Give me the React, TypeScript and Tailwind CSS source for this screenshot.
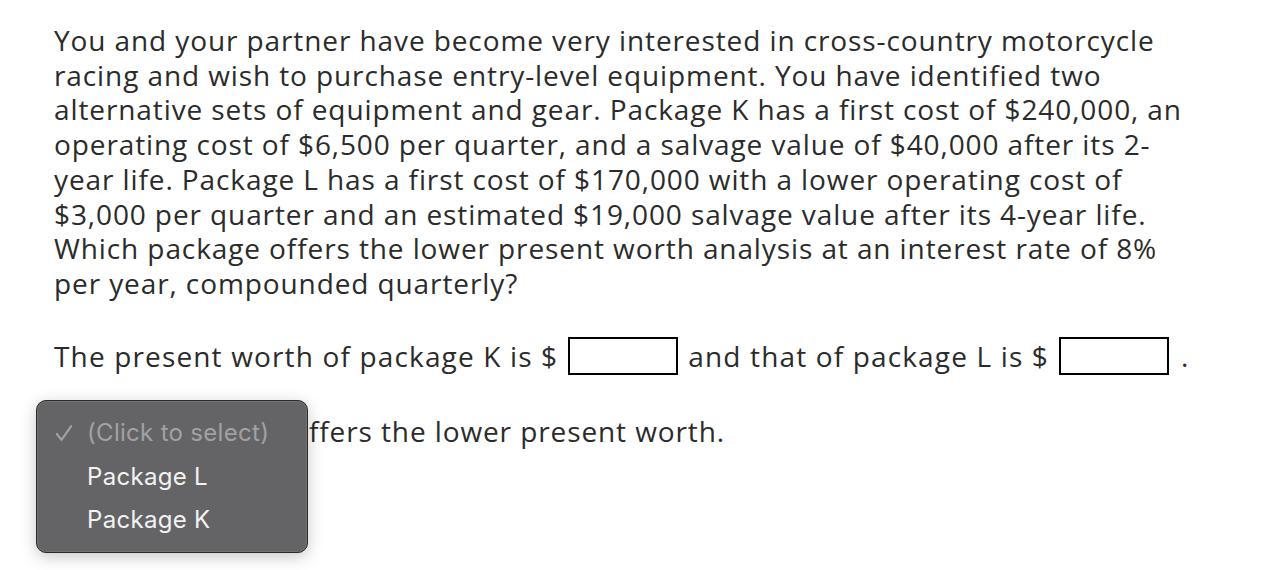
const lines = [
  'You and your partner have become very interested in cross-country motorcycle',
  'racing and wish to purchase entry-level equipment. You have identified two',
  'alternative sets of equipment and gear. Package K has a first cost of $240,000, an',
  'operating cost of $6,500 per quarter, and a salvage value of $40,000 after its 2-',
  'year life. Package L has a first cost of $170,000 with a lower operating cost of',
  '$3,000 per quarter and an estimated $19,000 salvage value after its 4-year life.',
  'Which package offers the lower present worth analysis at an interest rate of 8%',
  'per year, compounded quarterly?',
]

function AnswerBox() {
  return <span className="mx-[10px] inline-block h-[38px] w-[110px] border-2 border-black bg-white" />
}

function CheckIcon() {
  return (
    <svg width="18" height="18" viewBox="0 0 18 18" fill="none" stroke="currentColor" strokeWidth="2.2" strokeLinecap="round" strokeLinejoin="round">
      <path d="M1.8 10 6.5 15.8 16.2 2.2" />
    </svg>
  )
}

function SelectMenu() {
  return (
    <div className="absolute left-[36px] top-[400px] w-[272px] rounded-[10px] border border-[#2a2a2a] bg-[#646466] py-[10px] shadow-[0_0_0_1px_rgba(255,255,255,0.1)_inset,0_4px_16px_rgba(0,0,0,0.22)] font-['Inter',sans-serif] text-[24px] leading-[43.5px] tracking-[0.3px]">
      <div className="flex items-center pl-[18px] text-[#a1a1a4]">
        <span className="w-[32px]"><CheckIcon /></span>
        <span>(Click to select)</span>
      </div>
      <div className="pl-[50px] text-[#f2f2f2]">Package L</div>
      <div className="pl-[50px] text-[#f2f2f2]">Package K</div>
    </div>
  )
}

export default function App() {
  return (
    <div className="relative h-[570px] w-[1274px] bg-white font-['Open_Sans',sans-serif] text-[28px] tracking-[0.9px] text-[#2b2b2b]">
      <div className="px-[54px] pt-[23px] leading-[34.7px]">
        {lines.map((l) => (
          <div key={l} className="whitespace-nowrap">{l}</div>
        ))}
      </div>
      <div className="mt-[34px] flex items-center whitespace-nowrap px-[54px] tracking-[1.15px]">
        <span>The present worth of package K is $</span>
        <AnswerBox />
        <span>and that of package L is $</span>
        <AnswerBox />
        <span className="ml-[2px]">.</span>
      </div>
      <div className="mt-[33px] flex items-center whitespace-nowrap px-[54px]">
        <span className="inline-block h-[36px] w-[229px] rounded-[6px] border border-[#999]" />
        <span>&nbsp;offers the lower present worth.</span>
      </div>
      <SelectMenu />
    </div>
  )
}
